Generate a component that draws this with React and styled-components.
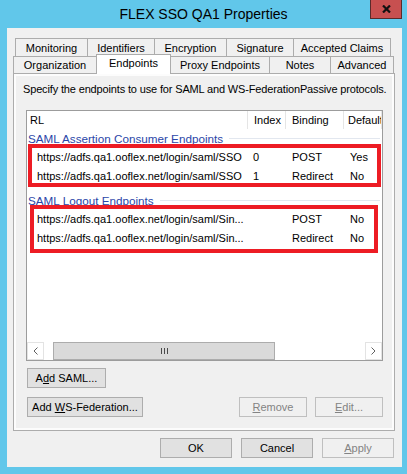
import React from "react";
import styled, { createGlobalStyle } from "styled-components";

const GlobalStyle = createGlobalStyle`
  html, body {
    margin: 0;
    padding: 0;
    background: #61c7ea;
  }
  body {
    font-family: "Liberation Sans", Arial, sans-serif;
    font-size: 11px;
    color: #000;
  }
`;

const Window = styled.div`
  width: 407px;
  height: 474px;
  background: #61c7ea;
  display: flex;
  flex-direction: column;
  overflow: hidden;
`;

const TitleBar = styled.div`
  height: 28px;
  flex-shrink: 0;
  display: grid;
  grid-template-columns: 1fr auto 1fr;
  align-items: start;
`;

const Title = styled.div`
  grid-column: 2;
  line-height: 28px;
  font-size: 14px;
  color: #000;
  white-space: nowrap;
`;

const CloseButton = styled.div`
  grid-column: 3;
  justify-self: end;
  width: 32px;
  height: 19px;
  margin-right: 5px;
  box-sizing: border-box;
  background: #c75050;
  border: 1px solid #5a2a2a;
  border-top: none;
  display: flex;
  align-items: center;
  justify-content: center;
`;

const Frame = styled.div`
  flex: 1;
  display: flex;
  padding: 0 5px 7px 7px;
  min-width: 0;
`;

const Body = styled.div`
  flex: 1;
  min-width: 0;
  background: #f0f0f0;
  display: flex;
  flex-direction: column;
  padding: 10px 7px 9px 6px;
`;

const TabRow = styled.div`
  display: flex;
  align-items: flex-end;
  height: ${(p) => p.$h}px;
  padding-left: ${(p) => p.$indent}px;
`;

const Tab = styled.div`
  width: ${(p) => p.$w}px;
  height: ${(p) => (p.$active ? 20 : p.$h)}px;
  margin-bottom: ${(p) => (p.$active ? -1 : 0)}px;
  box-sizing: border-box;
  flex-shrink: 0;
  border: 1px solid #acacac;
  border-bottom: none;
  background: ${(p) => (p.$active ? "#ffffff" : "#f0f0f0")};
  position: relative;
  z-index: ${(p) => (p.$active ? 2 : 1)};
  display: flex;
  align-items: center;
  justify-content: center;
  white-space: nowrap;
  padding-bottom: ${(p) => (p.$active ? 3 : 0)}px;

  & + & {
    margin-left: -1px;
  }
`;

const Panel = styled.div`
  min-width: 0;
  border: 1px solid #acacac;
  background: #fcfcfc;
  padding: 2px;
  display: flex;
  flex-direction: column;
`;

const Page = styled.div`
  min-width: 0;
  background: #f0f0f0;
  display: flex;
  flex-direction: column;
  padding: 7px 9px 11px 10px;
`;

const Description = styled.div`
  line-height: 13px;
  margin: 0 0 14px -3px;
  white-space: nowrap;
  letter-spacing: -0.15px;
`;

const ListBox = styled.div`
  height: 251px;
  min-width: 0;
  box-sizing: border-box;
  border: 1px solid #9c9c9c;
  background: #fff;
  display: flex;
  flex-direction: column;
  overflow: hidden;
`;

const ListBody = styled.div`
  flex: 1;
  min-width: 0;
  overflow: hidden;
`;

const COLS = "221px 38px 58px 1fr";

const Header = styled.div`
  display: grid;
  grid-template-columns: ${COLS};
  height: 18px;
  overflow: hidden;
`;

const HeaderCell = styled.div`
  border-right: 1px solid #e5e5e5;
  padding-left: ${(p) => p.$pad}px;
  line-height: 18px;
  white-space: nowrap;
  overflow: hidden;
`;

const Group = styled.div`
  margin-bottom: 4px;
`;

const GroupTitle = styled.div`
  display: flex;
  align-items: center;
  gap: 6px;
  height: ${(p) => p.$h}px;
  padding: 0 2px 0 1px;
  color: #2b46a8;
  font-size: 11.7px;
  white-space: nowrap;

  &::after {
    content: "";
    flex: 1;
    height: 1px;
    background: #e2e7ef;
  }
`;

const Rows = styled.div`
  position: relative;
`;

const Row = styled.div`
  display: grid;
  grid-template-columns: ${COLS};
  height: 19px;
  line-height: 19px;
`;

const Cell = styled.div`
  padding-left: ${(p) => p.$pad}px;
  white-space: nowrap;
  overflow: hidden;
`;

const Highlight = styled.div`
  position: absolute;
  top: ${(p) => p.$t}px;
  left: ${(p) => p.$l}px;
  right: ${(p) => p.$r}px;
  bottom: ${(p) => p.$b}px;
  border: 4px solid #ed1c24;
  pointer-events: none;
`;

const ScrollBar = styled.div`
  height: 18px;
  flex-shrink: 0;
  display: flex;
  background: #fff;
`;

const ScrollButton = styled.div`
  width: 17px;
  box-sizing: border-box;
  border: 1px solid #e3e3e3;
  background: #fff;
  display: flex;
  align-items: center;
  justify-content: center;
`;

const Track = styled.div`
  flex: 1;
  display: flex;
  padding-left: 9px;
  background: #fff;
`;

const Thumb = styled.div`
  width: 222px;
  box-sizing: border-box;
  background: #dadada;
  border: 1px solid #acacac;
  display: flex;
  align-items: center;
  justify-content: center;
  gap: 2px;
`;

const Grip = styled.span`
  width: 1px;
  height: 6px;
  background: #4a4a4a;
`;

const Button = styled.div`
  width: ${(p) => p.$w}px;
  height: 20px;
  box-sizing: border-box;
  flex-shrink: 0;
  border: 1px solid ${(p) => (p.$disabled ? "#bfbfbf" : "#adadad")};
  background: ${(p) => (p.$disabled ? "#f0f0f0" : "#e1e1e1")};
  color: ${(p) => (p.$disabled ? "#838383" : "#000")};
  display: flex;
  align-items: center;
  justify-content: center;
  white-space: nowrap;
`;

const SamlButton = styled(Button)`
  margin: 7px 0 0 1px;
`;

const ActionRow = styled.div`
  display: flex;
  gap: 8px;
  margin: 9px 0 0 1px;
`;

const Spacer = styled.div`
  flex: 1;
`;

const Footer = styled.div`
  display: flex;
  justify-content: flex-end;
  gap: 9px;
  margin-top: 7px;
  padding-right: 1px;
`;

const backTabs = [
  ["Monitoring", 73],
  ["Identifiers", 68],
  ["Encryption", 73],
  ["Signature", 68],
  ["Accepted Claims", 98],
];

const frontTabs = [
  ["Organization", 84],
  ["Endpoints", 75, true],
  ["Proxy Endpoints", 100],
  ["Notes", 62],
  ["Advanced", 64],
];

const groups = [
  {
    title: "SAML Assertion Consumer Endpoints",
    h: 19,
    box: { t: -4, l: 1, r: 1, b: -1 },
    rows: [
      ["https://adfs.qa1.ooflex.net/login/saml/SSO", "0", "POST", "Yes"],
      ["https://adfs.qa1.ooflex.net/login/saml/SSO", "1", "Redirect", "No"],
    ],
  },
  {
    title: "SAML Logout Endpoints",
    h: 20,
    box: { t: -5, l: 3, r: 4, b: -5 },
    rows: [
      ["https://adfs.qa1.ooflex.net/login/saml/Sin...", "", "POST", "No"],
      ["https://adfs.qa1.ooflex.net/login/saml/Sin...", "", "Redirect", "No"],
    ],
  },
];

const Chevron = ({ left }) => (
  <svg width="5" height="8" viewBox="0 0 5 8">
    <path
      d={left ? "M4.5 0.5 L1 4 L4.5 7.5" : "M0.5 0.5 L4 4 L0.5 7.5"}
      fill="none"
      stroke="#606060"
      strokeWidth="1"
    />
  </svg>
);

const App = () => {
  return (
    <Window>
      <GlobalStyle />
      <TitleBar>
        <Title>FLEX SSO QA1 Properties</Title>
        <CloseButton>
          <svg width="9" height="8" viewBox="0 0 9 8">
            <path d="M1 0.5 L8 7.5 M8 0.5 L1 7.5" stroke="#111" strokeWidth="2.2" />
          </svg>
        </CloseButton>
      </TitleBar>
      <Frame>
        <Body>
          <TabRow $h={18} $indent={2}>
            {backTabs.map(([label, w]) => (
              <Tab key={label} $w={w} $h={18}>{label}</Tab>
            ))}
          </TabRow>
          <TabRow $h={17} $indent={0}>
            {frontTabs.map(([label, w, active]) => (
              <Tab key={label} $w={w} $h={17} $active={active}>{label}</Tab>
            ))}
          </TabRow>
          <Panel>
            <Page>
              <Description>
                Specify the endpoints to use for SAML and WS-FederationPassive protocols.
              </Description>
              <ListBox>
                <ListBody>
                  <Header>
                    <HeaderCell $pad={3}>RL</HeaderCell>
                    <HeaderCell $pad={6}>Index</HeaderCell>
                    <HeaderCell $pad={6}>Binding</HeaderCell>
                    <HeaderCell $pad={4}>Default</HeaderCell>
                  </Header>
                  {groups.map((g) => (
                    <Group key={g.title}>
                      <GroupTitle $h={g.h}>{g.title}</GroupTitle>
                      <Rows>
                        {g.rows.map((r, i) => (
                          <Row key={i}>
                            <Cell $pad={10}>{r[0]}</Cell>
                            <Cell $pad={5}>{r[1]}</Cell>
                            <Cell $pad={6}>{r[2]}</Cell>
                            <Cell $pad={6}>{r[3]}</Cell>
                          </Row>
                        ))}
                        <Highlight $t={g.box.t} $l={g.box.l} $r={g.box.r} $b={g.box.b} />
                      </Rows>
                    </Group>
                  ))}
                </ListBody>
                <ScrollBar>
                  <ScrollButton>
                    <Chevron left />
                  </ScrollButton>
                  <Track>
                    <Thumb>
                      <Grip />
                      <Grip />
                      <Grip />
                    </Thumb>
                  </Track>
                  <ScrollButton>
                    <Chevron />
                  </ScrollButton>
                </ScrollBar>
              </ListBox>
              <SamlButton $w={79}>
                <span>A<u>d</u>d SAML...</span>
              </SamlButton>
              <ActionRow>
                <Button $w={116}>
                  <span>Add <u>W</u>S-Federation...</span>
                </Button>
                <Spacer />
                <Button $w={68} $disabled>
                  <span><u>R</u>emove</span>
                </Button>
                <Button $w={68} $disabled>
                  <span><u>E</u>dit...</span>
                </Button>
              </ActionRow>
            </Page>
          </Panel>
          <Footer>
            <Button $w={72}>OK</Button>
            <Button $w={72}>Cancel</Button>
            <Button $w={72} $disabled>
              <span><u>A</u>pply</span>
            </Button>
          </Footer>
        </Body>
      </Frame>
    </Window>
  );
};

export default App;
